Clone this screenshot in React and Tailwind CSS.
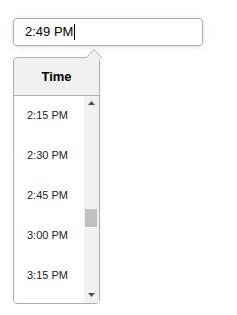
const TIMES = ['2:15 PM', '2:30 PM', '2:45 PM', '3:00 PM', '3:15 PM']

export default function App() {
  return (
    <div className="min-h-[315px] bg-white pl-[13px] pt-[18px] font-['Liberation_Sans',Arial,sans-serif] text-black">
      {/* input */}
      <div className="flex h-[28px] w-[190px] items-center rounded-[4px] border border-[#aaaaaa] pl-[11px] text-[13px] shadow-[0_1px_6px_rgba(0,0,0,0.12)]">
        <span>2:49 PM</span>
        <span className="ml-[1px] h-[16px] w-[1px] bg-black" />
      </div>

      {/* time popup */}
      <div className="relative mt-[11px] flex h-[247px] w-[87px] flex-col rounded-[4px] border border-[#aeaeae] bg-white">
        <svg className="absolute left-[71px] top-[-10px]" width="18" height="11" viewBox="0 0 18 11">
          <path d="M0.5 10.5 L9 1.5 L17.5 10.5 Z" fill="#f0f0f0" stroke="#aeaeae" />
          <rect x="0" y="10" width="18" height="1" fill="#f0f0f0" />
        </svg>

        <div className="flex h-[38px] items-center justify-center rounded-t-[4px] border-b border-[#aeaeae] bg-[#f0f0f0] text-[13px] font-bold">
          Time
        </div>

        <div className="flex min-h-0 flex-1">
          <ul className="min-h-0 flex-1 overflow-hidden">
            <div className="-mt-[1px]">
              {TIMES.map(t => (
                <li key={t} className="flex h-[40px] items-center pl-[13px] text-[11px] text-[#222]">
                  {t}
                </li>
              ))}
            </div>
          </ul>

          {/* scrollbar */}
          <div className="relative w-[15px] bg-[#f1f1f1]">
            <svg className="absolute left-[4px] top-[5px]" width="7" height="4" viewBox="0 0 7 4">
              <path d="M3.5 0 L7 4 L0 4 Z" fill="#505050" />
            </svg>
            <div className="absolute left-[1px] top-[113px] h-[18px] w-[12px] bg-[#c1c1c1]" />
            <svg className="absolute bottom-[6px] left-[4px]" width="7" height="4" viewBox="0 0 7 4">
              <path d="M0 0 L7 0 L3.5 4 Z" fill="#505050" />
            </svg>
          </div>
        </div>
      </div>
    </div>
  )
}
